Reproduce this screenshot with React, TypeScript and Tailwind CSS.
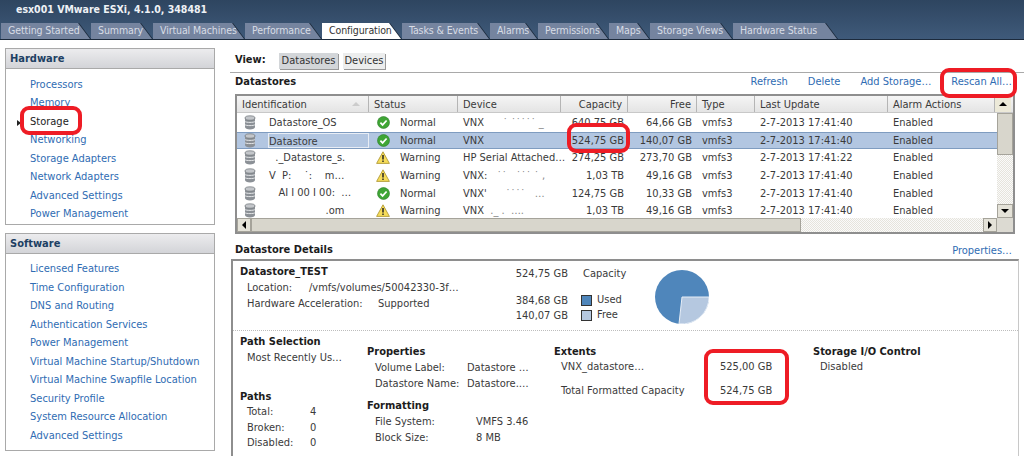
import React from "react";

const tabs = [
  { t: "Getting Started", w: "w-[90px]" },
  { t: "Summary", w: "w-[62px]" },
  { t: "Virtual Machines", w: "w-[92px]" },
  { t: "Performance", w: "w-[77px]" },
  { t: "Configuration", w: "w-[80px]", active: true },
  { t: "Tasks & Events", w: "w-[88px]" },
  { t: "Alarms", w: "w-[48px]" },
  { t: "Permissions", w: "w-[71px]" },
  { t: "Maps", w: "w-[41px]" },
  { t: "Storage Views", w: "w-[83px]" },
  { t: "Hardware Status", w: "w-[105px]" },
];

function Db() {
  return (
    <svg width="12" height="15" viewBox="0 0 12 15">
      <path d="M1 3v9c0 1.4 2.2 2.4 5 2.4s5-1 5-2.4V3z" fill="#8b9096" />
      <ellipse cx="6" cy="3" rx="5" ry="2.2" fill="#c3c6ca" stroke="#6f7479" strokeWidth="0.7" />
      <path d="M1 6.5c1 1.2 9 1.2 10 0M1 9.7c1 1.2 9 1.2 10 0" stroke="#e4e6e8" strokeWidth="1" fill="none" />
    </svg>
  );
}
function Ok() {
  return (
    <svg width="13" height="13" viewBox="0 0 13 13">
      <circle cx="6.5" cy="6.5" r="6" fill="#3fa535" stroke="#2b7d2a" strokeWidth="0.6" />
      <path d="M3.4 6.6l2.2 2.3 4-4.4" stroke="#fff" strokeWidth="1.7" fill="none" />
    </svg>
  );
}
function Warn() {
  return (
    <svg width="14" height="13" viewBox="0 0 14 13">
      <path d="M7 .8L13.4 12.4H.6z" fill="#f6dc5a" stroke="#a89028" strokeWidth="0.8" strokeLinejoin="round" />
      <path d="M7 4v4.6" stroke="#222" strokeWidth="1.5" />
      <path d="M7 9.6v1.5" stroke="#222" strokeWidth="1.4" />
    </svg>
  );
}

const cols = ["w-[132px]", "w-[89px]", "w-[103px]", "w-[67px]", "w-[69px]", "w-[58px]", "w-[133px]", "w-[107px]"];

const rows = [
  { id: "Datastore_OS", ok: true, s: "Normal", d: "VNX", dx: "      ˙ ˙˙˙˙˙ _", c: "640,75 GB", f: "64,66 GB", u: "2-7-2013 17:41:40" },
  { id: "Datastore", ok: true, s: "Normal", d: "VNX", dx: "", c: "524,75 GB", f: "140,07 GB", u: "2-7-2013 17:41:40", sel: true },
  { id: "  ._Datastore_s.", ok: false, s: "Warning", d: "HP Serial Attached…", dx: "", c: "274,25 GB", f: "273,70 GB", u: "2-7-2013 17:41:22" },
  { id: "V  P:    ˙:    m…", ok: false, s: "Warning", d: "VNX:", dx: "   ˙˙   ˙˙˙ ˙ ,", c: "1,03 TB", f: "49,16 GB", u: "2-7-2013 17:41:40" },
  { id: "   AI I 00 I 00:  …", ok: true, s: "Normal", d: "VNX'", dx: "      ˙˙˙˙   …", c: "124,75 GB", f: "10,33 GB", u: "2-7-2013 17:41:40" },
  { id: "                  .om", ok: false, s: "Warning", d: "VNX", dx: "  ._ .  ….", c: "1,03 TB", f: "49,16 GB", u: "2-7-2013 17:41:40" },
];

function NavPanel({ title, items, className, pad }: { title: string; items: string[]; className: string; pad: string }) {
  return (
    <section className={`border border-[#a9a9a9] bg-white ${className}`}>
      <h2 className="h-[20px] border-b border-[#a9a9a9] bg-gradient-to-b from-[#ececee] to-[#d3d4d8] pl-[4px] text-[11px] leading-[19px] font-bold text-[#1d3f63]">
        {title}
      </h2>
      <ul className={`pl-[24px] ${pad}`}>
        {items.map((i) => (
          <li key={i} className={`h-[18.5px] leading-[18px] ${i === "Storage" ? "relative text-[#222]" : "text-[#2f6cb3]"}`}>
            {i === "Storage" && <span className="absolute left-[-13px] top-[7px] h-0 w-0 border-y-[3px] border-l-[4px] border-y-transparent border-l-[#222]" />}
            {i}
          </li>
        ))}
      </ul>
    </section>
  );
}

function Heading({ children, className = "" }: { children: React.ReactNode; className?: string }) {
  return <h3 className={`text-[11px] font-bold text-[#1c1c1c] ${className}`}>{children}</h3>;
}

function Pair({ a, b, w, className = "" }: { a: string; b: string; w: string; className?: string }) {
  return (
    <div className={`flex h-[15.5px] leading-[15.5px] ${className}`}>
      <span className={w}>{a}</span>
      <span>{b}</span>
    </div>
  );
}

function RedBox({ className }: { className: string }) {
  return <div className={`pointer-events-none absolute rounded-[9px] border-[4px] border-[#ee1c25] ${className}`} />;
}

export default function App() {
  return (
    <div className="relative h-[456px] w-[1024px] overflow-hidden bg-white text-[11px] text-[#3a3a3a] [font-family:'DejaVu_Sans_Condensed','DejaVu_Sans',sans-serif] [font-stretch:condensed]">
      <header className="flex h-[40px] flex-col justify-between border-b border-[#1c2a3c] bg-gradient-to-b from-[#2e4560] to-[#3f5a7a]">
        <h1 className="pl-[16px] pt-[1px] text-[10.5px] leading-[16px] font-bold text-[#eef1f5]">esx001 VMware ESXi, 4.1.0, 348481</h1>
        <nav className="flex h-[16px] pl-[1px]">
          {tabs.map((t) => (
            <div key={t.t} className={`${t.w} h-full shrink-0 bg-[#1c2a3c] [clip-path:polygon(0_0,calc(100%-12px)_0,100%_100%,0_100%)]`}>
              <div
                className={`h-full pl-[7px] text-[10.5px] leading-[15px] tracking-[-0.1px] whitespace-nowrap [clip-path:polygon(0_0,calc(100%-13px)_0,calc(100%-1px)_100%,0_100%)] ${
                  t.active ? "bg-white text-[#333]" : "bg-[#75849f] text-[#d8dde6]"
                }`}
              >
                {t.t}
              </div>
            </div>
          ))}
        </nav>
      </header>

      <div className="flex">
        <aside className="flex w-[230px] shrink-0 flex-col gap-[8px] pl-[5px] pr-[15px] pt-[8px]">
          <NavPanel title="Hardware" pad="pt-[6.5px]" className="h-[177px]" items={["Processors", "Memory", "Storage", "Networking", "Storage Adapters", "Network Adapters", "Advanced Settings", "Power Management"]} />
          <NavPanel title="Software" pad="pt-[6px]" className="h-[218px]" items={["Licensed Features", "Time Configuration", "DNS and Routing", "Authentication Services", "Power Management", "Virtual Machine Startup/Shutdown", "Virtual Machine Swapfile Location", "Security Profile", "System Resource Allocation", "Advanced Settings"]} />
        </aside>

        <main className="min-w-0 flex-1">
          <div className="flex h-[33px] items-end border-b border-[#a9a9a9] pb-[3px] pl-[5px]">
            <span className="w-[44px] pb-[1px] text-[11px] font-bold text-[#1c1c1c]">View:</span>
            <span className="flex h-[16px] w-[59px] items-center justify-center bg-[#d3d6d9] text-[#333] shadow-[1px_1px_0_#999]">Datastores</span>
            <span className="ml-[5px] flex h-[16px] w-[42px] items-center justify-center bg-[#eceded] text-[#333] shadow-[1px_1px_0_#999]">Devices</span>
          </div>

          <div className="flex h-[21px] items-center justify-between pl-[5px] pr-[12px] pb-[2px]">
            <Heading>Datastores</Heading>
            <div className="flex gap-[20px] text-[#2f6cb3]">
              <span>Refresh</span>
              <span>Delete</span>
              <span>Add Storage…</span>
              <span>Rescan All…</span>
            </div>
          </div>

          <div className="ml-[5px] h-[140px] w-[780px] border-2 border-[#8e8e8e] bg-white">
            <div className="flex h-[17px] border-b border-[#c8c8c8] bg-gradient-to-b from-[#f5f5f5] to-[#e4e4e4]">
              {["Identification", "Status", "Device", "Capacity", "Free", "Type", "Last Update", "Alarm Actions"].map((h, i) => (
                <div key={h} className={`${cols[i]} relative shrink-0 border-r border-[#b5b5b5] px-[5px] leading-[17px] ${i === 3 || i === 4 ? "text-right" : ""}`}>
                  {h}
                  {i === 0 && <span className="absolute right-[8px] top-[6px] h-0 w-0 border-x-[4px] border-b-[4px] border-x-transparent border-b-[#ccc]" />}
                </div>
              ))}
              <div className="flex w-[16px] items-center justify-center bg-[#ece9d8]">
                <span className="h-0 w-0 border-x-[4px] border-b-[4px] border-x-transparent border-b-black" />
              </div>
            </div>
            <div className="flex h-[105px]">
              <div className="w-[760px] shrink-0 overflow-hidden pt-[1px]">
                {rows.map((r) => (
                  <div key={r.id} className={`flex h-[17.6px] w-[760px] items-center leading-[17px] whitespace-pre ${r.sel ? "border-y border-[#7f9cc0] bg-[#b2c6e1]" : ""}`}>
                    <div className={`${cols[0]} flex h-full shrink-0 items-center`}>
                      <span className="ml-[7px] mr-[12px] flex"><Db /></span>
                      <span className={`h-full flex-1 pl-[1px] ${r.sel ? "outline outline-1 outline-[#e8edf5] -outline-offset-1" : ""}`}>{r.id}</span>
                    </div>
                    <div className={`${cols[1]} flex shrink-0 items-center`}>
                      <span className="ml-[7px] mr-[10px] flex w-[14px] justify-center">{r.ok ? <Ok /> : <Warn />}</span>
                      {r.s}
                    </div>
                    <div className={`${cols[2]} shrink-0 pl-[5px]`}>{r.d}<span className="text-[#888]">{r.dx}</span></div>
                    <div className={`${cols[3]} shrink-0 pr-[4px] text-right`}>{r.c}</div>
                    <div className={`${cols[4]} shrink-0 pr-[5px] text-right`}>{r.f}</div>
                    <div className={`${cols[5]} shrink-0 pl-[5px]`}>vmfs3</div>
                    <div className={`${cols[6]} shrink-0 pl-[5px]`}>{r.u}</div>
                    <div className={`${cols[7]} shrink-0 pl-[5px]`}>Enabled</div>
                  </div>
                ))}
              </div>
              <div className="flex w-[16px] flex-col bg-[#efede5]">
                <div className="h-[42px] border border-[#a5a39a] bg-[#d8d6cc]" />
                <div className="flex-1 bg-[repeating-conic-gradient(#e6e4dc_0_25%,#fafafa_0_50%)] bg-[length:2px_2px]" />
                <div className="flex h-[14px] items-center justify-center border border-[#a5a39a] bg-[#e4e2d8]">
                  <span className="h-0 w-0 border-x-[4px] border-t-[4px] border-x-transparent border-t-black" />
                </div>
              </div>
            </div>
            <div className="flex h-[14px] bg-[repeating-conic-gradient(#e6e4dc_0_25%,#fafafa_0_50%)] bg-[length:2px_2px]">
              <div className="flex w-[14px] items-center justify-center border border-[#a5a39a] bg-[#e4e2d8]">
                <span className="h-0 w-0 border-y-[4px] border-r-[4px] border-y-transparent border-r-black" />
              </div>
              <div className="w-[550px] border border-[#a5a39a] bg-[#d8d6cc]" />
              <div className="flex-1" />
              <div className="flex w-[14px] items-center justify-center border border-[#a5a39a] bg-[#e4e2d8]">
                <span className="h-0 w-0 border-y-[4px] border-l-[4px] border-y-transparent border-l-black" />
              </div>
              <div className="w-[16px] bg-[#dcdad2]" />
            </div>
          </div>

          <div className="flex h-[25px] items-end justify-between pl-[5px] pr-[12px]">
            <Heading className="mb-[1px]">Datastore Details</Heading>
            <span className="text-[#2f6cb3]">Properties…</span>
          </div>

          <div className="ml-[1px] h-[200px] w-[788px] border-t-2 border-l-2 border-r border-t-[#8e8e8e] border-l-[#8e8e8e] border-r-[#c8c8c8]">
            <div className="flex h-[70px] border-b border-dotted border-[#bdbdbd] pl-[7px] pt-[3px]">
              <div className="w-[236px]">
                <Heading className="h-[16px] leading-[16px]">Datastore_TEST</Heading>
                <div className="pl-[7px]">
                  <Pair a="Location:" b="/vmfs/volumes/50042330-3f…" w="w-[62px]" />
                  <Pair a="Hardware Acceleration:" b="Supported" w="w-[131px]" />
                </div>
              </div>
              <div className="w-[92px] pt-[2px] text-right">
                <div className="h-[27px] leading-[15px]">524,75 GB</div>
                <div className="h-[15px] leading-[15px]">384,68 GB</div>
                <div className="h-[15px] leading-[15px]">140,07 GB</div>
              </div>
              <div className="w-[87px] pl-[13px] pt-[2px]">
                <div className="h-[27px] pl-[2px] leading-[15px]">Capacity</div>
                <div className="flex h-[15px] items-center gap-[5px]"><span className="h-[11px] w-[11px] border border-[#333] bg-[#4f86bb]" />Used</div>
                <div className="flex h-[15px] items-center gap-[5px]"><span className="h-[11px] w-[11px] border border-[#333] bg-[#b5c8e0]" />Free</div>
              </div>
              <svg width="54" height="54" viewBox="0 0 54 54" className="mt-[6px]">
                <circle cx="27" cy="27" r="27" fill="#4f86bb" />
                <path d="M27 27H54A27 27 0 0 1 24 53.8z" fill="#b5c8e0" stroke="#e6edf6" strokeWidth="1" />
              </svg>
            </div>
            <div className="flex pl-[7px] pt-[3px]">
              <div className="w-[127px]">
                <Heading className="h-[16px] leading-[16px]">Path Selection</Heading>
                <div className="h-[39px] pl-[7px] leading-[15.5px]">Most Recently Us…</div>
                <Heading className="h-[15px] leading-[16px]">Paths</Heading>
                <div className="pl-[7px]">
                  <Pair a="Total:" b="4" w="w-[63px]" />
                  <Pair a="Broken:" b="0" w="w-[63px]" />
                  <Pair a="Disabled:" b="0" w="w-[63px]" />
                </div>
              </div>
              <div className="w-[187px] pt-[10px]">
                <Heading className="h-[16px] leading-[16px]">Properties</Heading>
                <div className="h-[38px] pl-[8px]">
                  <Pair a="Volume Label:" b="Datastore …" w="w-[92px]" />
                  <Pair a="Datastore Name:" b="Datastore.…" w="w-[92px]" />
                </div>
                <Heading className="h-[16px] leading-[16px]">Formatting</Heading>
                <div className="pl-[8px]">
                  <Pair a="File System:" b="VMFS 3.46" w="w-[101px]" />
                  <Pair a="Block Size:" b="8 MB" w="w-[101px]" />
                </div>
              </div>
              <div className="w-[259px] pt-[10px]">
                <Heading className="h-[15px] leading-[16px]">Extents</Heading>
                <div className="pl-[7px]">
                  <Pair a="VNX_datastore…" b="525,00 GB" w="w-[159px]" className="mb-[8px]" />
                  <Pair a="Total Formatted Capacity" b="524,75 GB" w="w-[159px]" />
                </div>
              </div>
              <div className="pt-[10px]">
                <Heading className="h-[15px] leading-[16px]">Storage I/O Control</Heading>
                <div className="pl-[7px] leading-[15.5px]">Disabled</div>
              </div>
            </div>
          </div>
        </main>
      </div>

      <RedBox className="left-[20px] top-[106px] h-[29px] w-[62px]" />
      <RedBox className="left-[940px] top-[68px] h-[30px] w-[77px]" />
      <RedBox className="left-[567px] top-[123px] h-[30px] w-[63px]" />
      <RedBox className="left-[704px] top-[349px] h-[56px] w-[85px]" />
    </div>
  );
}
